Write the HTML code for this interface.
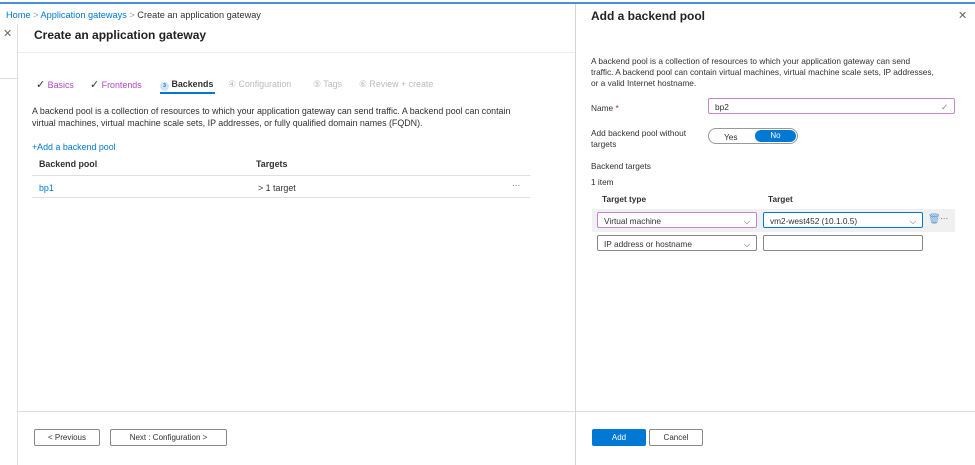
<!DOCTYPE html>
<html><head><style>
*{margin:0;padding:0;box-sizing:border-box}
body{width:975px;height:465px;overflow:hidden;background:#fff;font-family:"Liberation Sans",sans-serif;color:#323130;position:relative}
.a{position:absolute;white-space:nowrap}
.f9{font-size:9px}.f8{font-size:8.3px}
.L{font-size:8.9px}
.blue{color:#0078d4}
.inp{position:absolute;border:1px solid #8a8886;border-radius:2px;height:16px;font-size:8.3px;padding:3px 6px;background:#fff}
.btn{position:absolute;border:1px solid #8a8886;border-radius:2px;height:17px;font-size:8px;text-align:center;line-height:15px;background:#fff}
</style></head><body>
<div class="a" style="left:0;top:2px;width:975px;height:2px;background:#4a90d9"></div>
<div class="a" style="left:6px;top:10px;font-size:9.2px"><span class="blue">Home</span> <span style="color:#999">&gt;</span> <span class="blue">Application gateways</span> <span style="color:#999">&gt;</span> Create an application gateway</div>
<div class="a" style="left:3px;top:27px;font-size:11px;color:#666">✕</div>
<div class="a" style="left:17px;top:24px;width:1px;height:441px;background:#e1dfdd"></div>
<div class="a" style="left:0;top:78px;width:17px;height:1px;background:#e1dfdd"></div>
<div class="a" style="left:18px;top:52px;width:557px;height:1px;background:#eee"></div>
<div class="a" style="left:34px;top:28px;font-size:12px;font-weight:bold;color:#222">Create an application gateway</div>
<div class="a L" style="left:36px;top:78px;color:#b146c2"><span style="color:#333;font-size:11px">✓</span> Basics</div>
<div class="a L" style="left:90px;top:78px;color:#b146c2"><span style="color:#333;font-size:11px">✓</span> Frontends</div>
<div class="a L" style="left:160px;top:79px;font-weight:bold"><span style="display:inline-block;width:9px;height:9px;border-radius:50%;background:#cfe4fa;font-size:5px;text-align:center;line-height:9px;color:#0078d4">3</span> Backends</div>
<div class="a" style="left:160px;top:92px;width:55px;height:2px;background:#0078d4"></div>
<div class="a L" style="left:228px;top:79px;color:#bbb">④ Configuration</div>
<div class="a L" style="left:313px;top:79px;color:#bbb">⑤ Tags</div>
<div class="a L" style="left:359px;top:79px;color:#bbb">⑥ Review + create</div>
<div class="a L" style="left:32px;top:105px;line-height:12px">A backend pool is a collection of resources to which your application gateway can send traffic. A backend pool can contain<br>virtual machines, virtual machine scale sets, IP addresses, or fully qualified domain names (FQDN).</div>
<div class="a L blue" style="left:32px;top:142px">+Add a backend pool</div>
<div class="a L" style="left:39px;top:159px;font-weight:bold">Backend pool</div>
<div class="a L" style="left:256px;top:159px;font-weight:bold">Targets</div>
<div class="a" style="left:32px;top:175px;width:498px;height:1px;background:#e1dfdd"></div>
<div class="a L blue" style="left:39px;top:183px">bp1</div>
<div class="a L" style="left:258px;top:183px">&gt; 1 target</div>
<div class="a f8" style="left:512px;top:180px;color:#666">···</div>
<div class="a" style="left:32px;top:197px;width:498px;height:1px;background:#e1dfdd"></div>
<div class="a" style="left:18px;top:411px;width:957px;height:1px;background:#ddd"></div>
<div class="btn" style="left:34px;top:429px;width:66px">&lt; Previous</div>
<div class="btn" style="left:110px;top:429px;width:117px">Next : Configuration &gt;</div>
<div class="a" style="left:575px;top:4px;width:1px;height:461px;background:#d5d5d5"></div>
<div class="a" style="left:591px;top:9px;font-size:12px;font-weight:bold;color:#222">Add a backend pool</div>
<div class="a" style="left:958px;top:9px;font-size:11px;color:#666">✕</div>
<div class="a f8" style="left:591px;top:56px;line-height:11px">A backend pool is a collection of resources to which your application gateway can send<br>traffic. A backend pool can contain virtual machines, virtual machine scale sets, IP addresses,<br>or a valid Internet hostname.</div>
<div class="a f8" style="left:591px;top:103px">Name <span style="color:#a4262c">*</span></div>
<div class="inp" style="left:708px;top:98px;width:247px;border-color:#c387d0">bp2<span style="float:right;color:#888">✓</span></div>
<div class="a f8" style="left:591px;top:128px;line-height:11px">Add backend pool without<br>targets</div>
<div class="a" style="left:708px;top:128px;width:90px;height:16px;border:1px solid #999;border-radius:8px;background:#fff"></div>
<div class="a f8" style="left:724px;top:132px">Yes</div>
<div class="a" style="left:755px;top:130px;width:41px;height:12px;border-radius:6px;background:#0078d4;color:#fff;font-size:8px;text-align:center;line-height:12px">No</div>
<div class="a f8" style="left:591px;top:161px">Backend targets</div>
<div class="a f8" style="left:591px;top:177px">1 item</div>
<div class="a f8" style="left:602px;top:194px;font-weight:bold">Target type</div>
<div class="a f8" style="left:768px;top:194px;font-weight:bold">Target</div>
<div class="a" style="left:592px;top:209px;width:363px;height:23px;background:#f0f0f0"></div>
<div class="inp" style="left:597px;top:212px;width:160px;border-color:#c387d0">Virtual machine<span style="float:right;color:#555">⌵</span></div>
<div class="inp" style="left:763px;top:212px;width:160px;border-color:#0078d4">vm2-west452 (10.1.0.5)<span style="float:right;color:#555">⌵</span></div>
<div class="a" style="left:928px;top:214px;font-size:10px;color:#5b9bd5">🗑</div>
<div class="a f8" style="left:940px;top:213px;color:#555">···</div>
<div class="inp" style="left:597px;top:235px;width:160px">IP address or hostname<span style="float:right;color:#555">⌵</span></div>
<div class="inp" style="left:763px;top:235px;width:160px"></div>
<div class="btn" style="left:592px;top:429px;width:54px;background:#0078d4;border-color:#0078d4;color:#fff">Add</div>
<div class="btn" style="left:649px;top:429px;width:54px">Cancel</div>
</body></html>
